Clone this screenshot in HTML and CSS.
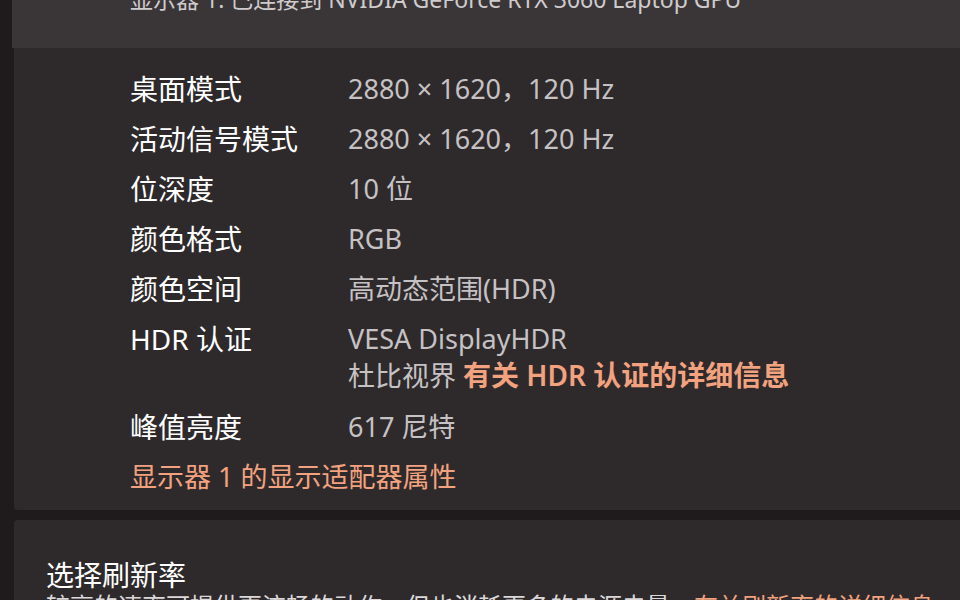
FILE: index.html
```html
<!DOCTYPE html>
<html lang="zh-CN">
<head>
<meta charset="utf-8">
<title>高级显示</title>
<link rel="stylesheet" href="styles.css">
</head>
<body>
<div class="page">
  <div class="card-top">
    <div class="top-text">显示器 1: 已连接到 NVIDIA GeForce RTX 3060 Laptop GPU</div>
  </div>
  <div class="card-main">
    <div class="row"><div class="label">桌面模式</div><div class="value">2880 × 1620，120 Hz</div></div>
    <div class="row"><div class="label">活动信号模式</div><div class="value">2880 × 1620，120 Hz</div></div>
    <div class="row"><div class="label">位深度</div><div class="value">10 位</div></div>
    <div class="row"><div class="label">颜色格式</div><div class="value">RGB</div></div>
    <div class="row"><div class="label">颜色空间</div><div class="value">高动态范围(HDR)</div></div>
    <div class="row row-multi"><div class="label">HDR 认证</div><div class="value value-multi"><div>VESA DisplayHDR</div><div>杜比视界 <span class="link-strong">有关 HDR 认证的详细信息</span></div></div></div>
    <div class="row"><div class="label">峰值亮度</div><div class="value">617 尼特</div></div>
    <div class="row"><div class="adapter link">显示器 1 的显示适配器属性</div></div>
  </div>
  <div class="card-bottom">
    <div class="title">选择刷新率</div>
    <div class="desc">较高的速率可提供更流畅的动作，但也消耗更多的电源电量。<span class="link">有关刷新率的详细信息</span></div>
  </div>
</div>
</body>
</html>
```
FILE: styles.css
```css
html, body {
  margin: 0;
  padding: 0;
}
body {
  width: 960px;
  height: 600px;
  overflow: hidden;
  background: #1f1b1d;
  font-family: "Noto Sans", "Noto Sans CJK SC", sans-serif;
  color: #ffffff;
}
.page {
  padding-left: 12px;
}
.card-top {
  height: 48px;
  background: #3a3638;
  padding-left: 118px;
  overflow: hidden;
}
.top-text {
  margin-top: -16px;
  font-size: 23px;
  line-height: 30px;
  color: #cfcbcd;
  white-space: nowrap;
}
.card-main {
  margin-left: 2px;
  height: 462px;
  box-sizing: border-box;
  background: #2e2a2c;
  padding: 16px 0 0 116px;
  border-bottom-left-radius: 4px;
}
.row {
  display: flex;
  line-height: 50px;
}
.label {
  width: 218px;
  flex: none;
  font-size: 28px;
  color: #ffffff;
  white-space: nowrap;
}
.adapter {
  font-size: 27px;
  white-space: nowrap;
}
.value {
  font-size: 27px;
  color: #c6c2c4;
}
.value-multi {
  line-height: 36px;
  padding: 7px 0 8px;
}
.link {
  color: #f2a27f;
}
.link-strong {
  color: #f2a27f;
  font-size: 28px;
  font-weight: 600;
}
.card-bottom {
  margin: 10px 0 0 2px;
  height: 80px;
  box-sizing: border-box;
  background: #2e2a2c;
  border-top-left-radius: 4px;
  padding: 39px 0 0 32px;
  overflow: hidden;
}
.title {
  font-size: 28px;
  line-height: 32px;
  color: #ffffff;
}
.desc {
  font-size: 24px;
  line-height: 30px;
  color: #dcd8da;
  white-space: nowrap;
}
```
